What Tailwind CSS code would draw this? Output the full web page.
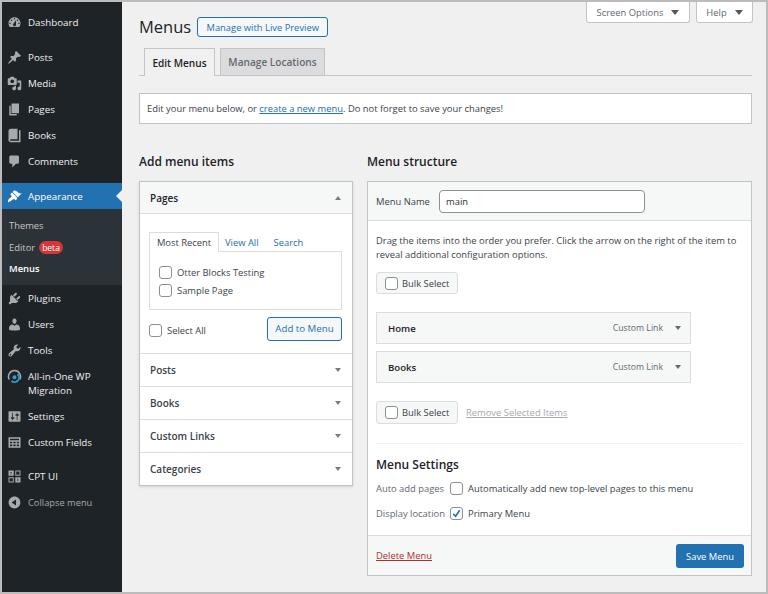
<!DOCTYPE html>
<html lang="en">
<head>
<meta charset="utf-8">
<title>Menus</title>
<script src="https://cdn.jsdelivr.net/npm/@tailwindcss/browser@4"></script>
</head>
<body class="m-0 overflow-hidden">
<div class="flex h-[594px] w-[768px] border-2 border-[#bcbcbc] bg-[#f0f0f1] font-['Open_Sans',sans-serif] text-[9.4px] leading-[15px] text-[#3c434a]">
  <!-- sidebar -->
  <nav class="flex w-[120px] shrink-0 flex-col bg-[#1d2327] pt-[7px] text-[9.8px] text-[#f0f0f1]">
    <a class="flex h-[26px] items-center"><svg class="ml-[5px] mr-[6px] size-[15px] fill-[#a7aaad]" viewBox="0 0 20 20"><path d="M3.76 16h12.48c1.1-1.37 1.76-3.11 1.76-5 0-4.42-3.58-8-8-8s-8 3.58-8 8c0 1.89.66 3.63 1.76 5zM10 4c.55 0 1 .45 1 1s-.45 1-1 1-1-.45-1-1 .45-1 1-1zM6 6c.55 0 1 .45 1 1s-.45 1-1 1-1-.45-1-1 .45-1 1-1zm8 0c.55 0 1 .45 1 1s-.45 1-1 1-1-.45-1-1 .45-1 1-1zm-5.37 5.55L12 7v6c0 1.1-.9 2-2 2s-2-.9-2-2c0-.57.24-1.08.63-1.45zM4 10c.55 0 1 .45 1 1s-.45 1-1 1-1-.45-1-1 .45-1 1-1zm12 0c.55 0 1 .45 1 1s-.45 1-1 1-1-.45-1-1 .45-1 1-1z"/></svg>Dashboard</a>
    <a class="mt-[9px] flex h-[26px] items-center"><svg class="ml-[5px] mr-[6px] size-[15px] fill-[#a7aaad]" viewBox="0 0 20 20"><path d="M10.44 3.02l1.82-1.82 6.36 6.35-1.83 1.82c-1.05-.68-2.48-.57-3.41.36l-.75.75c-.92.93-1.04 2.35-.35 3.41l-1.83 1.82-2.41-2.41-2.8 2.79c-.42.42-3.38 2.71-3.8 2.29s1.86-3.39 2.28-3.81l2.79-2.79L4.1 9.36l1.83-1.82c1.05.69 2.48.57 3.4-.36l.75-.75c.93-.92 1.05-2.35.36-3.41z"/></svg>Posts</a>
    <a class="flex h-[26px] items-center"><svg class="ml-[5px] mr-[6px] size-[15px] fill-[#a7aaad]" viewBox="0 0 20 20"><path d="M13 11V4c0-.55-.45-1-1-1h-1.67L9 1H5L3.67 3H2c-.55 0-1 .45-1 1v7c0 .55.45 1 1 1h10c.55 0 1-.45 1-1zM7 4.5c1.38 0 2.5 1.12 2.5 2.5S8.38 9.5 7 9.5 4.5 8.38 4.5 7 5.62 4.5 7 4.5zM14 6h5v10.5c0 1.38-1.12 2.5-2.5 2.5S14 17.88 14 16.5s1.12-2.5 2.5-2.5c.17 0 .34.02.5.05V9h-3V6zm-4 8.05V13h2v3.5c0 1.38-1.12 2.5-2.5 2.5S7 17.88 7 16.5 8.12 14 9.5 14c.17 0 .34.02.5.05z"/></svg>Media</a>
    <a class="flex h-[26px] items-center"><svg class="ml-[5px] mr-[6px] size-[15px] fill-[#a7aaad]" viewBox="0 0 20 20"><path d="M6 15V2h10v13H6zm-1 1h8v2H3V5h2v11z"/></svg>Pages</a>
    <a class="flex h-[26px] items-center"><svg class="ml-[5px] mr-[6px] size-[15px] fill-[#a7aaad]" viewBox="0 0 20 20"><path d="M16 3h2v16H5c-1.66 0-3-1.34-3-3V4c0-1.66 1.34-3 3-3h9v14H5c-.55 0-1 .45-1 1s.45 1 1 1h11V3z"/></svg>Books</a>
    <a class="flex h-[26px] items-center"><svg class="ml-[5px] mr-[6px] size-[15px] fill-[#a7aaad]" viewBox="0 0 20 20"><path d="M5 2h9c1.1 0 2 .9 2 2v7c0 1.1-.9 2-2 2h-2l-5 5v-5H5c-1.1 0-2-.9-2-2V4c0-1.1.9-2 2-2z"/></svg>Comments</a>
    <a class="relative mt-[9px] flex h-[26px] items-center bg-[#2271b1] text-white"><svg class="ml-[5px] mr-[6px] size-[15px] fill-white" viewBox="0 0 20 20"><path d="M14.48 11.06L7.41 3.99l1.5-1.5c.5-.56 2.3-.47 3.51.32 1.21.8 1.43 1.28 2.91 2.1 1.18.64 2.45 1.26 4.45.85zm-.71.71L6.7 4.7 4.93 6.47c-.39.39-.39 1.02 0 1.41l1.06 1.06c.39.39.39 1.03 0 1.42-.6.6-1.43 1.11-2.21 1.69-.35.26-.7.53-1.01.84-1.34 1.34-1.9 3.5-1.1 5.1.4-.31 1.2-1.2 2-1.6.6-.3.9 0 1.2.3.4-.4 1-1.3 1.7-1.9.6-.5 1.2-.9 1.9-1.2.39-.39 1.02-.39 1.41 0l1.06 1.06c.39.39 1.02.39 1.41 0z"/></svg>Appearance<span class="absolute right-0 top-[7px] size-0 border-y-[6px] border-r-[6px] border-y-transparent border-r-[#f0f0f1]"></span></a>
    <div class="flex h-[76px] flex-col bg-[#2c3338] pl-[7px] pt-[9px] text-[9.4px] text-[#c3c4c7]">
      <a class="flex h-[15px] items-center">Themes</a>
      <a class="mt-[7px] flex h-[15px] items-center">Editor<span class="ml-[4px] rounded-full bg-[#d63638] px-[3px] text-[8.5px] leading-[13px] text-white">beta</span></a>
      <a class="mt-[6px] flex h-[15px] items-center font-semibold text-white">Menus</a>
    </div>
    <a class="flex h-[26px] items-center"><svg class="ml-[5px] mr-[6px] size-[15px] fill-[#a7aaad]" viewBox="0 0 20 20"><path d="M13.11 4.36L9.87 7.6 8 5.73l3.24-3.24c.35-.34 1.05-.2 1.56.32.52.51.66 1.21.31 1.55zm-8 1.77l.91-1.12 9.01 9.01-1.19.84c-.71.71-2.63 1.16-3.82 1.16H6.14L4.9 17.26c-.59.59-1.54.59-2.12 0-.59-.58-.59-1.53 0-2.12l1.24-1.24v-3.88c0-1.13.4-3.19 1.09-3.89zm7.26 3.97l3.24-3.24c.34-.35 1.04-.21 1.55.31.52.51.66 1.21.31 1.55l-3.24 3.25z"/></svg>Plugins</a>
    <a class="flex h-[26px] items-center"><svg class="ml-[5px] mr-[6px] size-[15px] fill-[#a7aaad]" viewBox="0 0 20 20"><path d="M10 9.25c-2.27 0-2.73-3.44-2.73-3.44C7 4.02 7.82 2 9.97 2c2.16 0 2.98 2.02 2.71 3.81 0 0-.41 3.44-2.68 3.44zm0 2.57L12.72 10c2.39 0 4.52 2.33 4.52 4.53v2.49s-3.65 1.13-7.24 1.13c-3.65 0-7.24-1.13-7.24-1.13v-2.49c0-2.25 1.94-4.48 4.47-4.48z"/></svg>Users</a>
    <a class="flex h-[26px] items-center"><svg class="ml-[5px] mr-[6px] size-[15px] fill-[#a7aaad]" viewBox="0 0 20 20"><path d="M16.68 9.77c-1.34 1.34-3.3 1.67-4.95.99l-5.41 6.52c-.99.99-2.59.99-3.58 0s-.99-2.59 0-3.57l6.52-5.42c-.68-1.65-.35-3.61.99-4.95 1.28-1.28 3.12-1.62 4.72-1.06l-2.89 2.89 2.82 2.82 2.86-2.87c.53 1.58.18 3.39-1.08 4.65zM3.81 16.21c.4.39 1.04.39 1.43 0 .4-.4.4-1.04 0-1.43-.39-.4-1.03-.4-1.43 0-.39.39-.39 1.03 0 1.43z"/></svg>Tools</a>
    <a class="flex h-[40px] items-center"><svg class="ml-[5px] mr-[6px] mt-[6px] size-[15px] shrink-0 self-start" viewBox="0 0 20 20" fill="none"><path d="M3 14A8 8 0 1 1 17 14" stroke="#a7aaad" stroke-width="2"/><path d="M6 16a6 6 0 0 0 8-9" stroke="#2ea2cc" stroke-width="2.4"/><circle cx="10" cy="11" r="2.6" fill="#2ea2cc"/></svg><span class="pt-[2px] leading-[14px]">All-in-One WP Migration</span></a>
    <a class="flex h-[26px] items-center"><svg class="ml-[5px] mr-[6px] size-[15px] fill-[#a7aaad]" viewBox="0 0 20 20"><path d="M18 16V4c0-.55-.45-1-1-1H3c-.55 0-1 .45-1 1v12c0 .55.45 1 1 1h14c.55 0 1-.45 1-1zM8 11h1c.55 0 1 .45 1 1s-.45 1-1 1H8v1.5c0 .28-.22.5-.5.5s-.5-.22-.5-.5V13H6c-.55 0-1-.45-1-1s.45-1 1-1h1V5.5c0-.28.22-.5.5-.5s.5.22.5.5V11zm5-2h-1c-.55 0-1-.45-1-1s.45-1 1-1h1V5.5c0-.28.22-.5.5-.5s.5.22.5.5V7h1c.55 0 1 .45 1 1s-.45 1-1 1h-1v5.5c0 .28-.22.5-.5.5s-.5-.22-.5-.5V9z"/></svg>Settings</a>
    <a class="flex h-[26px] items-center"><svg class="ml-[5px] mr-[6px] size-[15px] fill-[#a7aaad]" viewBox="0 0 20 20"><path fill-rule="evenodd" d="M2 3h16v14H2zM4 5v2h12V5zM4 9v2h3V9zm4.500 0v2h3V9zM13 9v2h3V9zM4 12.500v2.500h3v-2.500zM8.500 12.500v2.500h3v-2.500zM13 12.500v2.500h3v-2.500z"/></svg>Custom Fields</a>
    <a class="mt-[8px] flex h-[26px] items-center"><svg class="ml-[5px] mr-[6px] size-[15px] fill-[#a7aaad]" viewBox="0 0 20 20"><path fill-rule="evenodd" d="M2 2h7v7H2zM4 4l1.500 1.500L4 7h1.500L5.500 6 6.500 7H7L5.500 5.500 7 4H6.500L5.500 5 5.500 4zM11 2h7v7h-7zm1.300 1.300v4.400h4.400V3.300zM2 11h7v7H2zm1.300 1.300v4.400h4.400v-4.400zM11 11h7v7h-7zM13 13l1.500 1.500L13 16h1.500v-1l1 1H16l-1.500-1.500L16 13h-.5l-1 1v-1z"/></svg>CPT UI</a>
    <a class="flex h-[26px] items-center text-[9.3px] text-[#a7aaad]"><svg class="ml-[5px] mr-[6px] size-[15px] fill-[#a7aaad]" viewBox="0 0 20 20"><path d="M10 2.160c4.330 0 7.840 3.510 7.840 7.840s-3.510 7.840-7.840 7.840S2.160 14.330 2.160 10 5.710 2.160 10 2.160zm2 11.720V6.120L6.180 9.970z"/></svg>Collapse menu</a>
  </nav>

  <!-- main -->
  <main class="flex min-w-0 flex-1 flex-col pl-[17px] pr-[14px]">
    <header class="flex h-[46px] items-start">
      <div class="flex items-center pt-[15px]">
        <h1 class="text-[16.5px] leading-[20px] text-[#1d2327]">Menus</h1>
        <a class="ml-[6px] flex h-[20px] w-[131px] items-center justify-center rounded-[3px] border border-[#2271b1] bg-[#f6f7f7] font-medium text-[#2271b1]">Manage with Live Preview</a>
      </div>
      <div class="ml-auto mr-[-1px] flex gap-[6px]">
        <span class="flex h-[21px] w-[104px] items-center justify-center gap-[8px] rounded-b-[3px] border border-t-0 border-[#c3c4c7] bg-white text-[#646970]">Screen Options<i class="size-0 border-x-[4px] border-t-[5px] border-x-transparent border-t-[#50575e]"></i></span>
        <span class="flex h-[21px] w-[57px] items-center justify-center gap-[8px] rounded-b-[3px] border border-t-0 border-[#c3c4c7] bg-white text-[#646970]">Help<i class="size-0 border-x-[4px] border-t-[5px] border-x-transparent border-t-[#50575e]"></i></span>
      </div>
    </header>

    <div class="flex h-[28px] gap-[5px] border-b border-[#c3c4c7] pl-[5px]">
      <span class="flex h-[28px] w-[71px] items-center justify-center border border-b-0 border-[#c3c4c7] bg-[#f0f0f1] text-[10.1px] font-semibold leading-[14px] text-[#1d2327]">Edit Menus</span>
      <span class="flex h-[27px] w-[105px] items-center justify-center border border-b-0 border-[#c3c4c7] bg-[#dcdcde] text-[10.1px] font-semibold leading-[14px] text-[#646970]">Manage Locations</span>
    </div>

    <div class="mt-[17px] flex h-[31px] items-center border border-[#c3c4c7] bg-white pl-[7px]">
      <p class="leading-[14px]">Edit your menu below, or <a class="text-[#2271b1] underline">create a new menu</a>. Do not forget to save your changes!</p>
    </div>

    <div class="mt-[30px] flex items-start gap-[14px]">
      <!-- left column -->
      <section class="w-[214px] shrink-0">
        <h2 class="h-[27px] text-[12px] font-semibold leading-[16px] text-[#1d2327]">Add menu items</h2>
        <div class="border border-[#c3c4c7] bg-white text-[10px] leading-[14px] shadow-sm">
          <div class="flex h-[32px] items-center justify-between border-b border-[#dcdcde] bg-[#f6f7f7] px-[10px] font-semibold text-[#1d2327]">Pages<i class="mr-[1px] size-0 border-x-[3.5px] border-b-[4px] border-x-transparent border-b-[#787c82]"></i></div>
          <div class="h-[140px] border-b border-[#dcdcde] px-[9px] pt-[18px] text-[9.4px]">
            <div class="flex h-[20px]">
              <span class="z-10 flex h-[20px] w-[70px] items-center justify-center border border-b-0 border-[#dcdcde] bg-white">Most Recent</span>
              <span class="ml-[6px] flex items-center pt-[1px] text-[#2271b1]">View All</span>
              <span class="ml-[15px] flex items-center pt-[1px] text-[#2271b1]">Search</span>
            </div>
            <div class="mt-[-1px] flex h-[59px] w-[193px] flex-col gap-[5px] border border-[#dcdcde] px-[9px] pt-[14px]">
              <label class="flex h-[13px] items-center gap-[5px]"><span class="size-[13px] rounded-[3px] border border-[#8c8f94] bg-white"></span>Otter Blocks Testing</label>
              <label class="flex h-[13px] items-center gap-[5px]"><span class="size-[13px] rounded-[3px] border border-[#8c8f94] bg-white"></span>Sample Page</label>
            </div>
            <div class="mt-[7px] flex w-[193px] items-center justify-between">
              <label class="flex items-center gap-[5px] pt-[3px]"><span class="size-[13px] rounded-[3px] border border-[#8c8f94] bg-white"></span>Select All</label>
              <button class="h-[24px] w-[75px] rounded-[3px] border border-[#2271b1] bg-[#f6f7f7] text-[9.7px] text-[#2271b1]">Add to Menu</button>
            </div>
          </div>
          <div class="flex h-[33px] items-center justify-between border-b border-[#dcdcde] px-[10px] font-semibold">Posts<i class="mr-[1px] size-0 border-x-[3.5px] border-t-[4px] border-x-transparent border-t-[#787c82]"></i></div>
          <div class="flex h-[33px] items-center justify-between border-b border-[#dcdcde] px-[10px] font-semibold">Books<i class="mr-[1px] size-0 border-x-[3.5px] border-t-[4px] border-x-transparent border-t-[#787c82]"></i></div>
          <div class="flex h-[33px] items-center justify-between border-b border-[#dcdcde] px-[10px] font-semibold">Custom Links<i class="mr-[1px] size-0 border-x-[3.5px] border-t-[4px] border-x-transparent border-t-[#787c82]"></i></div>
          <div class="flex h-[32px] items-center justify-between px-[10px] font-semibold">Categories<i class="mr-[1px] size-0 border-x-[3.5px] border-t-[4px] border-x-transparent border-t-[#787c82]"></i></div>
        </div>
      </section>

      <!-- right column -->
      <section class="w-[385px] shrink-0">
        <h2 class="h-[27px] text-[12px] font-semibold leading-[16px] text-[#1d2327]">Menu structure</h2>
        <div class="flex h-[395px] flex-col border border-[#c3c4c7] bg-white">
          <div class="flex h-[39px] shrink-0 items-center border-b border-[#dcdcde] bg-[#f6f7f7] pl-[8px]">
            <span class="w-[63px]">Menu Name</span>
            <span class="flex h-[23px] w-[206px] items-center rounded-[4px] border border-[#8c8f94] bg-white pl-[6px] text-[#2c3338]">main</span>
          </div>
          <div class="flex-1 px-[8px] pt-[13px]">
            <p class="w-[366px] leading-[14px]">Drag the items into the order you prefer. Click the arrow on the right of the item to reveal additional configuration options.</p>
            <div class="mt-[10px] flex h-[22px] w-[82px] items-center gap-[4px] rounded-[3px] border border-[#dcdcde] bg-[#f6f7f7] pl-[8px]"><span class="size-[13px] rounded-[3px] border border-[#8c8f94] bg-white"></span>Bulk Select</div>
            <div class="mt-[18px] flex h-[32px] w-[315px] items-center justify-between border border-[#dcdcde] bg-[#f6f7f7] pl-[11px] pr-[9px]"><b class="text-[9.6px] font-semibold text-[#1d2327]">Home</b><span class="flex items-center gap-[12px] text-[8.7px] text-[#646970]">Custom Link<i class="size-0 border-x-[3.5px] border-t-[4px] border-x-transparent border-t-[#646970]"></i></span></div>
            <div class="mt-[7px] flex h-[32px] w-[315px] items-center justify-between border border-[#dcdcde] bg-[#f6f7f7] pl-[11px] pr-[9px]"><b class="text-[9.6px] font-semibold text-[#1d2327]">Books</b><span class="flex items-center gap-[12px] text-[8.7px] text-[#646970]">Custom Link<i class="size-0 border-x-[3.5px] border-t-[4px] border-x-transparent border-t-[#646970]"></i></span></div>
            <div class="mt-[18px] flex items-center gap-[8px]">
              <div class="flex h-[23px] w-[82px] items-center gap-[4px] rounded-[3px] border border-[#dcdcde] bg-[#f6f7f7] pl-[8px]"><span class="size-[13px] rounded-[3px] border border-[#8c8f94] bg-white"></span>Bulk Select</div>
              <a class="text-[#a7aaad] underline">Remove Selected Items</a>
            </div>
            <div class="mt-[19px] border-t border-[#f0f0f1] pt-[13px]">
              <h3 class="text-[12px] font-semibold leading-[16px] text-[#1d2327]">Menu Settings</h3>
              <div class="mt-[9px] flex h-[13px] items-center"><span class="w-[74px] text-[#646970]">Auto add pages</span><span class="size-[13px] rounded-[3px] border border-[#8c8f94] bg-white"></span><span class="ml-[5px]">Automatically add new top-level pages to this menu</span></div>
              <div class="mt-[12px] flex h-[13px] items-center"><span class="w-[74px] text-[#646970]">Display location</span><span class="flex size-[13px] items-center justify-center rounded-[3px] border border-[#8c8f94] bg-white"><svg class="size-[11px]" viewBox="0 0 12 12" fill="none"><path d="M2.500 6.500 5 9l4.500-6.500" stroke="#2271b1" stroke-width="1.800"/></svg></span><span class="ml-[5px]">Primary Menu</span></div>
            </div>
          </div>
          <div class="flex h-[40px] shrink-0 items-center justify-between border-t border-[#dcdcde] bg-[#f6f7f7] pl-[8px] pr-[7px]">
            <a class="text-[#b32d2e] underline">Delete Menu</a>
            <button class="mt-[1px] h-[24px] w-[68px] rounded-[3px] bg-[#2271b1] text-white">Save Menu</button>
          </div>
        </div>
      </section>
    </div>
  </main>
</div>
</body>
</html>
